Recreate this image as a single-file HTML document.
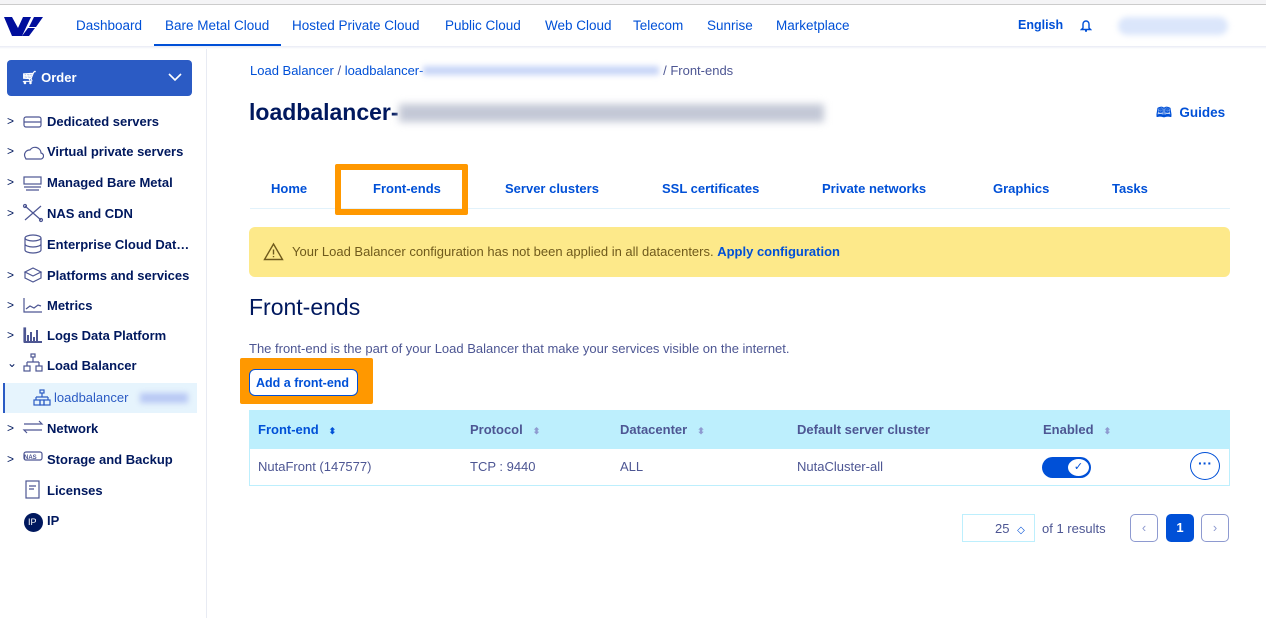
<!DOCTYPE html>
<html><head><meta charset="utf-8"><style>
*{box-sizing:border-box;margin:0;padding:0}
body{width:1266px;height:618px;overflow:hidden;background:#fff;font-family:"Liberation Sans",sans-serif;color:#00185e;position:relative;font-size:13px}
.a{position:absolute;white-space:nowrap}
.nav{color:#0050d7;font-size:13.5px;top:18px}
.side{left:47px;font-weight:bold;font-size:13px;color:#00185e}
.chev{left:7px;font-size:12px;color:#00185e}
.tab{top:181px;font-weight:bold;color:#0050d7;font-size:13px}
.th{top:422px;font-weight:bold;font-size:13px;color:#4d5693}
.td{top:459px;font-size:13px;color:#4d5693}
.sort{color:#8e9ad0;font-size:9px;margin-left:10px}
</style></head><body>
<div class="a" style="left:0;top:0;width:1266px;height:5px;background:#f4f4f6;border-bottom:1px solid #ccc"></div>
<div class="a" style="left:0;top:46px;width:1266px;height:3px;background:linear-gradient(#e8ebf5,#fff)"></div>
<svg class="a" style="left:4px;top:14px" width="40" height="25" viewBox="0 0 40 25"><path d="M0 3h8l6 11 5-11h8L18 22H8z" fill="#000e9c"/><path d="M30 3h9l-7 10h-7zM24 14h7l-6 8h-7z" fill="#000e9c"/></svg>
<div class="a nav" style="left:76px">Dashboard</div>
<div class="a nav" style="left:165px">Bare Metal Cloud</div>
<div class="a" style="left:154px;top:44px;width:127px;height:2px;background:#0050d7"></div>
<div class="a nav" style="left:292px">Hosted Private Cloud</div>
<div class="a nav" style="left:445px">Public Cloud</div>
<div class="a nav" style="left:545px">Web Cloud</div>
<div class="a nav" style="left:633px">Telecom</div>
<div class="a nav" style="left:707px">Sunrise</div>
<div class="a nav" style="left:776px">Marketplace</div>
<div class="a nav" style="left:1018px;font-weight:bold;font-size:12.5px">English</div>
<svg class="a" style="left:1080px;top:18px" width="12" height="14" fill="none" stroke="#0050d7" stroke-width="1.4"><path d="M3 10V6a3 3 0 0 1 6 0v4l1.5 1.5h-9zM5 13h2"/></svg>
<div class="a" style="left:1118px;top:17px;width:110px;height:18px;background:#dbe6fb;filter:blur(3px);border-radius:9px"></div>

<div class="a" style="left:206px;top:49px;width:1px;height:569px;background:#e8ebf3"></div>
<div class="a" style="left:7px;top:60px;width:185px;height:36px;background:#2b5bc4;border-radius:4px;color:#fff;font-weight:bold;font-size:13px;padding:10px 0 0 14px">🛒︎ Order</div>
<svg class="a" style="left:168px;top:72px" width="14" height="10" fill="none" stroke="#fff" stroke-width="1.6"><path d="M1 2l6 6 6-6"/></svg>

<div class="a chev" style="top:114px">&gt;</div><div class="a side" style="top:114px">Dedicated servers</div>
<div class="a chev" style="top:144px">&gt;</div><div class="a side" style="top:144px">Virtual private servers</div>
<div class="a chev" style="top:175px">&gt;</div><div class="a side" style="top:175px">Managed Bare Metal</div>
<div class="a chev" style="top:206px">&gt;</div><div class="a side" style="top:206px">NAS and CDN</div>
<div class="a side" style="top:237px">Enterprise Cloud Dat…</div>
<div class="a chev" style="top:268px">&gt;</div><div class="a side" style="top:268px">Platforms and services</div>
<div class="a chev" style="top:298px">&gt;</div><div class="a side" style="top:298px">Metrics</div>
<div class="a chev" style="top:328px">&gt;</div><div class="a side" style="top:328px">Logs Data Platform</div>
<div class="a chev" style="top:356px;font-size:12px">&#8964;</div><div class="a side" style="top:358px">Load Balancer</div>
<div class="a" style="left:3px;top:383px;width:194px;height:30px;background:#e6f4fd;border-left:2px solid #2b5bc4"></div>
<div class="a" style="left:54px;top:390px;color:#2b5bc4;font-size:13px">loadbalancer</div>
<div class="a" style="left:140px;top:393px;width:48px;height:10px;background:#b8c8f4;filter:blur(3px)"></div>
<div class="a chev" style="top:421px">&gt;</div><div class="a side" style="top:421px">Network</div>
<div class="a chev" style="top:452px">&gt;</div><div class="a side" style="top:452px">Storage and Backup</div>
<div class="a side" style="top:483px">Licenses</div>
<div class="a side" style="top:513px">IP</div>
<svg class="a" style="left:22px;top:112px" width="22" height="420" fill="none" stroke="#4d5693" stroke-width="1.2">
<rect x="2" y="5" width="17" height="10" rx="2"/><line x1="2" y1="10" x2="19" y2="10"/>
<path d="M3 45a5 5 0 0 1 5-7 6 6 0 0 1 11 3 3 3 0 0 1-1 6H4z"/>
<rect x="2" y="65" width="17" height="7"/><path d="M2 75h17M4 78h13"/>
<path d="M3 94l16 14M19 94L3 108"/><circle cx="3" cy="94" r="1.5"/><circle cx="19" cy="108" r="1.5"/>
<ellipse cx="11" cy="126" rx="8" ry="3"/><path d="M3 126v12a8 3 0 0 0 16 0v-12M3 132a8 3 0 0 0 16 0"/>
<path d="M11 156l8 4-8 4-8-4zM3 160v6l8 4 8-4v-6"/>
<path d="M2 186v14h18M4 197l4-3 4 2 4-3 3 1"/>
<rect x="2" y="216" width="1.5" height="14" fill="#4d5693"/><path d="M6 229v-6M9 229v-9M12 229v-4M15 229v-11M2 230h18" stroke-width="2"/>
<path d="M11 245v5M5 250h12M5 250v4M17 250v4"/><rect x="9" y="242" width="4" height="3"/><rect x="2" y="254" width="6" height="5"/><rect x="14" y="254" width="6" height="5"/>
<path d="M2 312h18l-3-3M20 318H2l3 3"/>
<rect x="2" y="340" width="18" height="8" rx="2"/>
<rect x="4" y="369" width="13" height="17"/><path d="M7 374h7M7 377h5"/>
</svg>
<div class="a" style="left:24px;top:513px;width:19px;height:19px;border-radius:50%;background:#00185e;color:#fff;font-size:9px;padding:4px 0 0 4px">IP</div>
<div class="a" style="left:24px;top:455px;font-size:6px;font-weight:bold;color:#4d5693">NAS</div>
<svg class="a" style="left:33px;top:389px" width="18" height="18" fill="none" stroke="#2b5bc4" stroke-width="1.2"><rect x="7" y="1" width="4" height="3"/><path d="M9 4v4M3 8h12M3 8v3M15 8v3"/><rect x="1" y="11" width="6" height="5"/><rect x="11" y="11" width="6" height="5"/><rect x="7" y="11" width="4" height="5"/></svg>

<div class="a" style="left:250px;top:63px;font-size:13px;color:#0050d7">Load Balancer <span style="color:#4d5693">/</span> loadbalancer-<span style="display:inline-block;width:236px;height:9px;background:#c8d5f7;filter:blur(3px)"></span> <span style="color:#4d5693">/ Front-ends</span></div>
<div class="a" style="left:249px;top:99px;font-size:23px;font-weight:bold;color:#00185e">loadbalancer-<span style="display:inline-block;width:425px;height:18px;background:#c3c8d6;filter:blur(4px);vertical-align:-2px"></span></div>
<div class="a" style="left:1156px;top:103px;font-size:13.5px;font-weight:bold;color:#0050d7">🕮︎ &nbsp;Guides</div>

<div class="a tab" style="left:271px">Home</div>
<div class="a tab" style="left:373px">Front-ends</div>
<div class="a tab" style="left:505px">Server clusters</div>
<div class="a tab" style="left:662px">SSL certificates</div>
<div class="a tab" style="left:822px">Private networks</div>
<div class="a tab" style="left:993px">Graphics</div>
<div class="a tab" style="left:1112px">Tasks</div>
<div class="a" style="left:250px;top:208px;width:980px;height:1px;background:#e2f2fb"></div>
<div class="a" style="left:335px;top:164px;width:133px;height:51px;border:6px solid #ff9800;border-radius:2px"></div>

<div class="a" style="left:249px;top:227px;width:981px;height:50px;background:#fde98a;border-radius:6px"></div>
<svg class="a" style="left:263px;top:242px" width="21" height="19" fill="none" stroke="#6f5a1c" stroke-width="1.4"><path d="M10.5 2L19.5 17.5H1.5z"/><path d="M10.5 7.5v5M10.5 14v1.3"/></svg>
<div class="a" style="left:292px;top:244px;font-size:13px;color:#6f5a1c">Your Load Balancer configuration has not been applied in all datacenters. <b style="color:#0050d7">Apply configuration</b></div>

<div class="a" style="left:249px;top:294px;font-size:23px;color:#00185e">Front-ends</div>
<div class="a" style="left:249px;top:341px;font-size:13px;color:#4d5693">The front-end is the part of your Load Balancer that make your services visible on the internet.</div>
<div class="a" style="left:240px;top:358px;width:133px;height:46px;background:#ff9800;border-radius:2px"></div>
<div class="a" style="left:249px;top:369px;width:109px;height:27px;background:#fff;border:1px solid #0050d7;border-radius:6px;color:#0050d7;font-weight:bold;font-size:12.5px;padding:6px 0 0 6px">Add a front-end</div>

<div class="a" style="left:249px;top:410px;width:981px;height:76px;border:1px solid #bdeffd"></div>
<div class="a" style="left:249px;top:410px;width:981px;height:39px;background:#bdeffd"></div>
<div class="a th" style="left:258px;color:#0050d7">Front-end<span class="sort" style="color:#0050d7">⬍</span></div>
<div class="a th" style="left:470px">Protocol<span class="sort">⬍</span></div>
<div class="a th" style="left:620px">Datacenter<span class="sort">⬍</span></div>
<div class="a th" style="left:797px">Default server cluster</div>
<div class="a th" style="left:1043px">Enabled<span class="sort">⬍</span></div>
<div class="a td" style="left:258px">NutaFront (147577)</div>
<div class="a td" style="left:470px">TCP : 9440</div>
<div class="a td" style="left:620px">ALL</div>
<div class="a td" style="left:797px">NutaCluster-all</div>
<div class="a" style="left:1042px;top:457px;width:49px;height:21px;background:#0050d7;border-radius:11px"></div>
<div class="a" style="left:1068px;top:459px;width:21px;height:17px;background:#fff;border-radius:50%;color:#0050d7;font-size:11px;text-align:center;line-height:17px">✓</div>
<div class="a" style="left:1190px;top:452px;width:30px;height:28px;border:1.5px solid #0050d7;border-radius:50%;color:#0050d7;font-weight:bold;text-align:center;line-height:20px;font-size:14px">···</div>

<div class="a" style="left:962px;top:514px;width:73px;height:28px;border:1px solid #bdeffd;font-size:13px;color:#4d5693;padding:6px 0 0 32px">25 <span style="color:#0050d7;font-size:10px;margin-left:4px">◇</span></div>
<div class="a" style="left:1042px;top:521px;font-size:13px;color:#4d5693">of 1 results</div>
<div class="a" style="left:1130px;top:514px;width:28px;height:28px;border:1px solid #8e9ad0;border-radius:5px;color:#8e9ad0;text-align:center;line-height:26px">‹</div>
<div class="a" style="left:1166px;top:514px;width:28px;height:28px;background:#0050d7;border-radius:5px;color:#fff;font-weight:bold;text-align:center;line-height:28px">1</div>
<div class="a" style="left:1201px;top:514px;width:28px;height:28px;border:1px solid #8e9ad0;border-radius:5px;color:#8e9ad0;text-align:center;line-height:26px">›</div>
</body></html>
